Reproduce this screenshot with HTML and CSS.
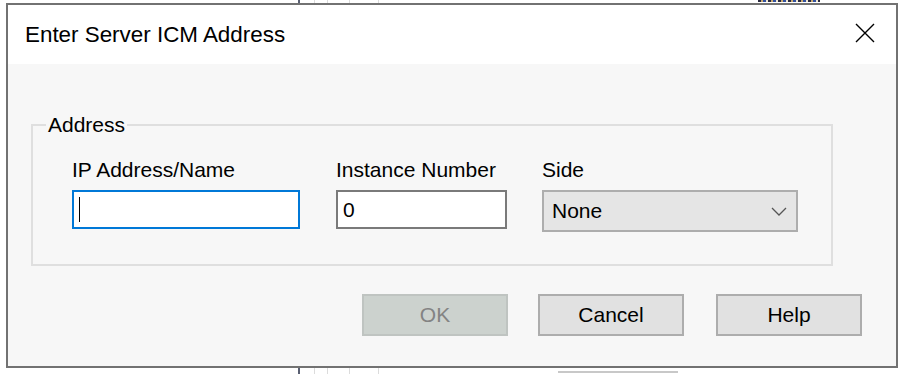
FILE: index.html
```html
<!DOCTYPE html>
<html>
<head>
<meta charset="utf-8">
<link rel="stylesheet" href="styles.css">
</head>
<body>
<div class="desktop">
  <div class="bg-line bg-dark" style="left:298px"></div>
  <div class="bg-line" style="left:314px"></div>
  <div class="bg-line" style="left:327px"></div>
  <div class="bg-line" style="left:349px"></div>
  <div class="bg-line" style="left:378px"></div>
  <div class="bg-bar"></div>
  <div class="bg-text"></div>
</div>
<div class="stage">
  <div class="dialog">
    <div class="titlebar">
      <span class="title">Enter Server ICM Address</span>
      <svg class="close" width="20" height="20" viewBox="0 0 20 20">
        <path d="M1 1 L19 19 M19 1 L1 19" stroke="#000" stroke-width="1.4" fill="none"/>
      </svg>
    </div>
    <div class="content">
      <fieldset class="group">
        <legend class="legend">Address</legend>
        <div class="fields">
          <div class="field f-ip">
            <div class="label">IP Address/Name</div>
            <div class="input focused"><span class="caret"></span></div>
          </div>
          <div class="field f-inst">
            <div class="label">Instance Number</div>
            <div class="input">0</div>
          </div>
          <div class="field f-side">
            <div class="label">Side</div>
            <div class="combo">
              <span>None</span>
              <svg class="chev" width="16" height="9" viewBox="0 0 16 9">
                <path d="M1 1 L8 8 L15 1" stroke="#555" stroke-width="1.3" fill="none"/>
              </svg>
            </div>
          </div>
        </div>
      </fieldset>
      <div class="buttons">
        <div class="btn disabled b-ok">OK</div>
        <div class="btn b-cancel">Cancel</div>
        <div class="btn">Help</div>
      </div>
    </div>
  </div>
</div>
</body>
</html>
```

FILE: styles.css
```css
html, body {
  margin: 0;
  padding: 0;
  background: #ffffff;
  width: 898px;
  height: 374px;
  overflow: hidden;
  font-family: "Liberation Sans", Arial, sans-serif;
}

.desktop {
  position: absolute;
  left: 0;
  top: 0;
  width: 898px;
  height: 374px;
  z-index: 0;
}

.bg-line {
  position: absolute;
  top: 0;
  width: 1px;
  height: 374px;
  background: #dcdcdc;
}

.bg-dark {
  width: 2px;
  background: #5a6072;
}

.bg-bar {
  position: absolute;
  left: 558px;
  top: 371px;
  width: 120px;
  height: 2px;
  background: #c8c8c8;
}

.bg-text {
  position: absolute;
  left: 758px;
  top: 0;
  width: 62px;
  height: 2px;
  background: repeating-linear-gradient(90deg, #2a2a40 0 3px, #c8a870 3px 5px, #3050a0 5px 8px, #f0e8d0 8px 10px);
}

.stage {
  position: relative;
  z-index: 1;
  padding: 3px 0 0 6px;
}

.dialog {
  width: 888px;
  height: 361px;
  border: 2px solid #727272;
  background: #f7f7f7;
  display: flex;
  flex-direction: column;
}

.titlebar {
  height: 59px;
  background: #ffffff;
  display: flex;
  align-items: center;
  justify-content: space-between;
  padding: 0 21px 0 17px;
}

.title {
  font-size: 22.4px;
  color: #000;
}

.close {
  display: block;
  margin-top: -4px;
}

.content {
  display: flex;
  flex-direction: column;
  padding: 0 34px 0 23px;
}

.group {
  margin: 49px 0 0 0;
  width: 772px;
  border: 2px solid #dfdfdf;
  padding: 21px 13px 32px 13px;
}

.legend {
  padding: 0 2px;
  font-size: 21px;
  line-height: 24px;
  color: #000;
}

.fields {
  display: flex;
  align-items: flex-start;
  margin-left: 26px;
}

.field {
  display: flex;
  flex-direction: column;
  gap: 8px;
}

.f-ip { width: 228px; margin-right: 36px; }
.f-inst { width: 171px; margin-right: 35px; }
.f-side { width: 256px; }

.label {
  font-size: 21px;
  line-height: 24px;
  color: #000;
}

.input {
  box-sizing: border-box;
  height: 39px;
  background: #fff;
  border: 2px solid #7a7a7a;
  font-size: 21px;
  display: flex;
  align-items: center;
  padding-left: 5px;
}

.input.focused {
  border-color: #0078d7;
}

.caret {
  display: block;
  width: 1px;
  height: 25px;
  background: #000;
  margin-left: 0;
}

.combo {
  box-sizing: border-box;
  height: 42px;
  background: #e5e5e5;
  border: 2px solid #adadad;
  font-size: 21px;
  display: flex;
  align-items: center;
  justify-content: space-between;
  padding: 0 9px 0 8px;
}

.chev {
  display: block;
}

.buttons {
  display: flex;
  justify-content: flex-end;
  margin-top: 28px;
}

.btn {
  box-sizing: border-box;
  width: 146px;
  height: 42px;
  background: #e1e1e1;
  border: 2px solid #adadad;
  font-size: 21px;
  display: flex;
  align-items: center;
  justify-content: center;
  color: #000;
}

.b-ok { margin-right: 30px; }
.b-cancel { margin-right: 32px; }

.btn.disabled {
  background: #ccd2ce;
  border-color: #bfc4c1;
  color: #838383;
}
```
